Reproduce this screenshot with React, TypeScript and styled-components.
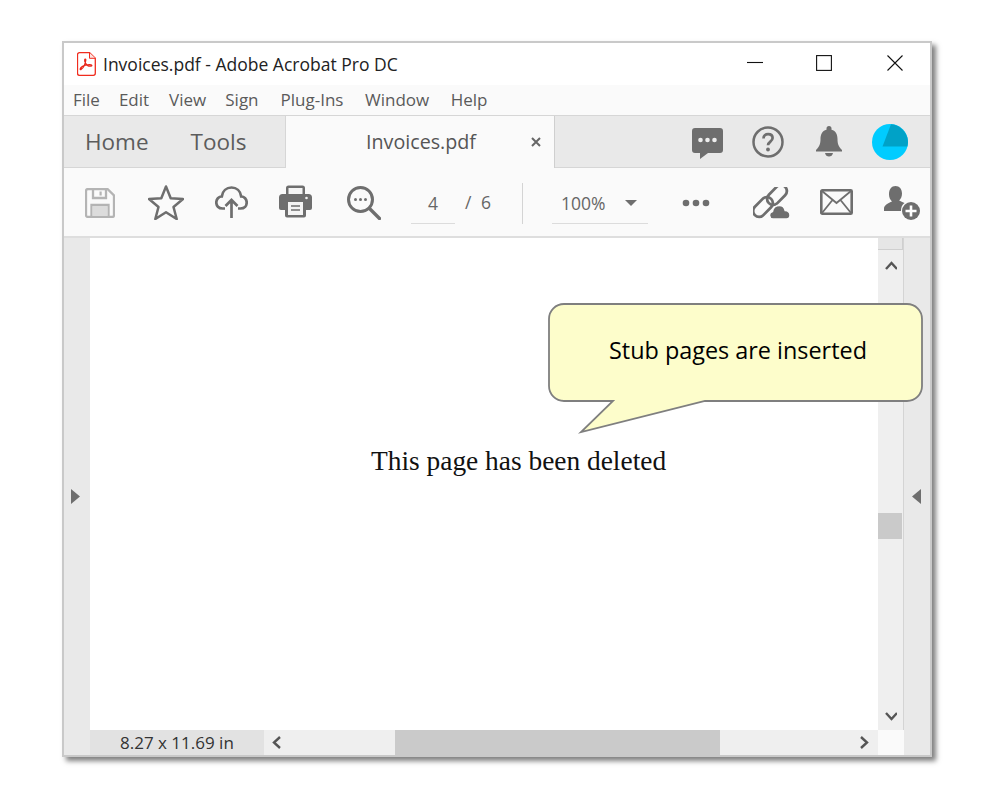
import React from 'react';
import styled, { createGlobalStyle } from 'styled-components';

const GlobalStyle = createGlobalStyle`
  html, body {
    margin: 0;
    padding: 0;
    background: #fff;
  }
`;

const UI_FONT = `"Open Sans", "Noto Sans", sans-serif`;

const Screen = styled.div`
  box-sizing: border-box;
  min-height: 100vh;
  padding: 41px 0 0 62px;
`;

const Window = styled.div`
  box-sizing: border-box;
  width: 870px;
  height: 716px;
  border: 2px solid #c9c9c9;
  box-shadow: 4px 4px 5px rgba(0, 0, 0, 0.5);
  display: flex;
  flex-direction: column;
  font-family: ${UI_FONT};
  background: #fff;
`;

const TitleBar = styled.div`
  height: 42px;
  display: flex;
  align-items: center;
  padding-left: 13px;
  background: #fff;
`;

const AppTitle = styled.span`
  margin-left: 7px;
  font-size: 17.5px;
  color: #222;
  flex: 1;
  white-space: nowrap;
`;

const WinControls = styled.div`
  display: flex;
  align-items: center;
  margin-right: 27px;
  padding-bottom: 2px;
`;

const MenuBar = styled.div`
  height: 30px;
  box-sizing: border-box;
  padding: 0 0 2px 9px;
  display: flex;
  align-items: center;
  background: #fafafa;
`;

const MenuItem = styled.span<{ $ml: number }>`
  margin-left: ${p => p.$ml}px;
  font-size: 17px;
  color: #5a5a5a;
`;

const TabRow = styled.div`
  height: 53px;
  box-sizing: border-box;
  display: flex;
  background: #e9e9e9;
  border-top: 1.5px solid #d6d6d6;
`;

const NavTabs = styled.div`
  width: 221px;
  box-sizing: border-box;
  padding: 0 0 1px 21px;
  display: flex;
  align-items: center;
  gap: 42px;
  border-bottom: 1.5px solid #d6d6d6;
`;

const NavTab = styled.span`
  font-size: 22.5px;
  color: #5c5c5c;
`;

const DocTab = styled.div`
  width: 270px;
  box-sizing: border-box;
  display: flex;
  align-items: center;
  padding: 0 13px 0 80px;
  background: #fafafa;
  border-left: 1px solid #d6d6d6;
  border-right: 1.5px solid #cfcfcf;
`;

const DocTabName = styled.span`
  flex: 1;
  padding-bottom: 1px;
  font-size: 19.7px;
  color: #555;
`;

const TabActions = styled.div`
  flex: 1;
  display: flex;
  align-items: center;
  border-bottom: 1.5px solid #d6d6d6;
  padding-left: 137px;
`;

const Toolbar = styled.div`
  height: 70px;
  box-sizing: border-box;
  display: flex;
  align-items: center;
  padding-left: 21px;
  background: #fafafa;
  border-bottom: 2px solid #dedede;
`;

const Glyph = styled.svg<{ $ml?: number; $mt?: number }>`
  display: block;
  flex: none;
  margin-left: ${p => p.$ml ?? 0}px;
  margin-top: ${p => p.$mt ?? 0}px;
`;

const PageField = styled.div`
  width: 44px;
  height: 40px;
  margin: 4px 0 0 30px;
  padding-bottom: 2px;
  box-sizing: border-box;
  border-bottom: 1.5px solid #dcdcdc;
  display: flex;
  align-items: center;
  justify-content: center;
  font-size: 17.5px;
  color: #666;
`;

const PageTotal = styled.span`
  margin: 0 0 0 10px;
  width: 37px;
  font-size: 17.5px;
  word-spacing: 5px;
  color: #666;
`;

const Divider = styled.div`
  width: 1px;
  height: 41px;
  margin-top: 3px;
  margin-left: 20px;
  background: #d4d4d4;
`;

const ZoomField = styled.div`
  width: 96px;
  height: 40px;
  margin: 4px 0 0 29px;
  box-sizing: border-box;
  padding: 0 11px 2px 9px;
  border-bottom: 1.5px solid #dcdcdc;
  display: flex;
  align-items: center;
  justify-content: space-between;
  font-size: 17.5px;
  color: #666;
`;

const Body = styled.div`
  position: relative;
  height: 492px;
  display: flex;
`;

const SidePanel = styled.div<{ $w: number; $line?: boolean; $pr: number }>`
  width: ${p => p.$w}px;
  box-sizing: border-box;
  display: flex;
  align-items: center;
  justify-content: center;
  padding: 24px ${p => p.$pr}px 0 0;
  background: #e9e9e9;
  border-left: ${p => (p.$line ? '1px solid #d4d4d4' : 'none')};
`;

const Page = styled.div`
  width: 788px;
  box-sizing: border-box;
  padding: 208px 0 0 281px;
  background: #fff;
  font-family: "Liberation Serif", "Times New Roman", serif;
  font-size: 27.4px;
  color: #111;
  white-space: nowrap;
`;

const VScroll = styled.div`
  width: 25px;
  background: #efefef;
  display: flex;
  flex-direction: column;
  align-items: center;
`;

const ScrollCap = styled.div`
  width: 100%;
  height: 12px;
  box-sizing: border-box;
  background: #e6e6e6;
  border-bottom: 1px solid #cfcfcf;
  border-right: 1px solid #cfcfcf;
`;

const VThumb = styled.div`
  width: 24px;
  height: 26px;
  margin: 240px 1px 0 0;
  background: #cacaca;
`;

const BottomRow = styled.div`
  height: 25px;
  display: flex;
`;

const BottomGutter = styled.div<{ $w: number }>`
  width: ${p => p.$w}px;
  background: #e9e9e9;
`;

const SizeBox = styled.div`
  width: 174px;
  box-sizing: border-box;
  padding: 0 0 0 30px;
  display: flex;
  align-items: center;
  background: #e2e2e2;
  font-size: 17px;
  color: #333;
`;

const HScroll = styled.div`
  width: 614px;
  box-sizing: border-box;
  padding: 0 8px 0 7px;
  display: flex;
  align-items: center;
  background: #efefef;
`;

const HThumb = styled.div`
  width: 325px;
  height: 100%;
  margin: 0 auto 0 112px;
  background: #cacaca;
`;

const ScrollCorner = styled.div`
  width: 26px;
  background: #fafafa;
`;

const Callout = styled.div`
  position: absolute;
  left: 484px;
  top: 65px;
  width: 377px;
  height: 132px;
`;

const CalloutShape = styled.svg`
  position: absolute;
  left: 0;
  top: 0;
`;

const CalloutText = styled.div`
  position: relative;
  height: 96px;
  padding-left: 3px;
  padding-bottom: 2px;
  box-sizing: border-box;
  display: flex;
  align-items: center;
  justify-content: center;
  font-size: 23.4px;
  color: #000;
`;

const GREY = '#6e6e6e';

const PdfIcon = () => (
  <Glyph width="19" height="24" viewBox="0 0 19 24" fill="none">
    <path d="M2.500 .7h10l5.800 5.600v15a2 2 0 0 1-2 2H2.500a2 2 0 0 1-2-2V2.700a2 2 0 0 1 2-2z" fill="#fff" stroke="#f02c1e" strokeWidth="1.300" />
    <path d="M12.500 .7v5.600h5.800" stroke="#f02c1e" strokeWidth="1" fill="#fde3e0" />
    <path d="M4 17.500c2.500-1.500 4.200-5 4.800-9.500.1-1-.9-1.200-1.100-.2-.4 2 1.800 5.200 3.400 6 1.300.6 3.800.6 3.800-.4 0-1-3-1.100-6.500-.2-2.500.7-4.700 2.400-5.200 3.700-.2.600.4 1 .8.600z" stroke="#e8261a" strokeWidth="1.300" />
  </Glyph>
);

const MinimizeIcon = () => (
  <Glyph width="16" height="16" viewBox="0 0 16 16">
    <path d="M0 7.500h16" stroke="#111" strokeWidth="1.100" />
  </Glyph>
);

const MaximizeIcon = () => (
  <Glyph $ml={53} width="16" height="16" viewBox="0 0 16 16">
    <rect x=".6" y=".6" width="14.800" height="14.800" fill="none" stroke="#111" strokeWidth="1.100" />
  </Glyph>
);

const CloseIcon = () => (
  <Glyph $ml={55} width="16" height="16" viewBox="0 0 16 16">
    <path d="M.5.500l15 15M15.500.500l-15 15" stroke="#111" strokeWidth="1.100" />
  </Glyph>
);

const TabCloseIcon = () => (
  <Glyph width="10" height="10" viewBox="0 0 10 10">
    <path d="M1 1l8 8M9 1l-8 8" stroke="#666" strokeWidth="2" />
  </Glyph>
);

const ChatIcon = () => (
  <Glyph width="31" height="31" viewBox="0 0 31 31" $mt={3}>
    <path d="M3 0h25a3 3 0 0 1 3 3v19a3 3 0 0 1-3 3H16l-8 6v-6H3a3 3 0 0 1-3-3V3a3 3 0 0 1 3-3z" fill={GREY} />
    <circle cx="8.500" cy="12" r="2.300" fill="#eee" />
    <circle cx="15.500" cy="12" r="2.300" fill="#eee" />
    <circle cx="22.500" cy="12" r="2.300" fill="#eee" />
  </Glyph>
);

const HelpIcon = () => (
  <Glyph $ml={29} width="32" height="32" viewBox="0 0 32 32" fill="none">
    <circle cx="16" cy="16" r="14.500" stroke={GREY} strokeWidth="2.500" />
    <path d="M11.500 12.500c0-2.700 2-4.300 4.600-4.300s4.500 1.500 4.500 3.900c0 3.500-4.600 3.500-4.600 7.200" stroke={GREY} strokeWidth="2.700" />
    <circle cx="16" cy="23.500" r="1.900" fill={GREY} />
  </Glyph>
);

const BellIcon = () => (
  <Glyph $ml={32} width="26" height="31" viewBox="0 0 26 31">
    <path d="M13 0a2.500 2.500 0 0 1 2.500 2.500v1.200C20 5 21.500 8.500 21.500 13c0 5 1 7.500 4.500 11v1.500H0V24c3.500-3.500 4.500-6 4.500-11 0-4.500 1.500-8 6-9.300V2.500A2.500 2.500 0 0 1 13 0z" fill={GREY} />
    <path d="M9 27h8c-.5 2.500-2 3.500-4 3.500S9.500 29.500 9 27z" fill={GREY} />
  </Glyph>
);

const AvatarIcon = () => (
  <Glyph $ml={30} width="36" height="36" viewBox="0 0 36 36">
    <circle cx="18" cy="18" r="18" fill="#00ccff" />
    <path d="M19 .2A18 18 0 0 1 35.700 21l-.4 1.500H10.500z" fill="#00a2c7" />
  </Glyph>
);

const SaveIcon = () => (
  <Glyph width="30" height="30" viewBox="0 0 30 30" fill="none" $mt={2}>
    <path d="M3 1h19.500L29 7.500V27a2 2 0 0 1-2 2H3a2 2 0 0 1-2-2V3a2 2 0 0 1 2-2z" stroke="#b4b4b4" strokeWidth="2.300" />
    <path d="M8 1.500v8.500h13V1.500M6.500 28.500V17h17v11.500" stroke="#b4b4b4" strokeWidth="2.300" />
    <rect x="7.500" y="18" width="15" height="10" fill="#dcdcdc" />
    <rect x="14.500" y="3.500" width="2.200" height="4" fill="#b4b4b4" />
  </Glyph>
);

const StarIcon = () => (
  <Glyph $ml={33} width="36" height="36" viewBox="0 0 36 36" fill="none">
    <path d="M18 2.500l4.700 11.700 12.300.8-9.500 8 3.200 12L18 28.300 7.300 35l3.200-12-9.500-8 12.300-.8z" stroke={GREY} strokeWidth="2.500" strokeLinejoin="round" />
  </Glyph>
);

const UploadIcon = () => (
  <Glyph $ml={31} width="33" height="33" viewBox="0 0 33 33" fill="none" $mt={1}>
    <path d="M10 22.500H7.500C3.500 22.500 1.300 19.800 1.300 16.500s2.400-6 5.500-6C7.500 5 11.500 1.500 16.500 1.500s9 3.500 9.700 9c3.100 0 5.500 2.700 5.500 6s-2.200 6-6.200 6H23" stroke={GREY} strokeWidth="2.700" />
    <path d="M16.500 32V14.500M10.500 20l6-6 6 6" stroke={GREY} strokeWidth="2.700" />
  </Glyph>
);

const PrintIcon = () => (
  <Glyph $ml={31} width="33" height="33" viewBox="0 0 33 33" $mt={-1}>
    <path d="M7 9V3a2.500 2.500 0 0 1 2.500-2.500h14A2.500 2.500 0 0 1 26 3v6h3.500A3.500 3.500 0 0 1 33 12.500V23a2 2 0 0 1-2 2h-4v5.500a2 2 0 0 1-2 2H8a2 2 0 0 1-2-2V25H2a2 2 0 0 1-2-2V12.500A3.500 3.500 0 0 1 3.500 9z" fill={GREY} />
    <rect x="9.500" y="3" width="14" height="6" fill="#f4f4f4" />
    <rect x="9" y="17" width="15" height="13" fill="#f4f4f4" />
    <path d="M12 21h9M12 25h9" stroke={GREY} strokeWidth="1.600" />
    <circle cx="27.500" cy="13" r="1.300" fill="#f4f4f4" />
  </Glyph>
);

const SearchIcon = () => (
  <Glyph $ml={35} width="34" height="34" viewBox="0 0 34 34" fill="none" $mt={1}>
    <circle cx="13.500" cy="13.500" r="12" stroke={GREY} strokeWidth="3" />
    <path d="M22.500 22.500L32.500 32.500" stroke={GREY} strokeWidth="3.400" strokeLinecap="round" />
    <circle cx="8.500" cy="13.500" r="1.500" fill={GREY} />
    <circle cx="13.500" cy="13.500" r="1.500" fill={GREY} />
    <circle cx="18.500" cy="13.500" r="1.500" fill={GREY} />
  </Glyph>
);

const CaretIcon = () => (
  <Glyph width="12" height="6" viewBox="0 0 12 6">
    <path d="M0 0h12L6 6z" fill={GREY} />
  </Glyph>
);

const MoreIcon = () => (
  <Glyph $ml={34} width="28" height="8" viewBox="0 0 28 8" $mt={2}>
    <circle cx="4" cy="4" r="3.300" fill={GREY} />
    <circle cx="14" cy="4" r="3.300" fill={GREY} />
    <circle cx="24" cy="4" r="3.300" fill={GREY} />
  </Glyph>
);

const LinkIcon = () => (
  <Glyph $ml={43} width="37" height="33" viewBox="0 0 37 33" fill="none" $mt={2}>
    <rect x="-1.500" y="14" width="23" height="12" rx="6" transform="rotate(-45 10 20)" stroke={GREY} strokeWidth="2.800" />
    <rect x="12.500" y="2" width="23" height="12" rx="6" transform="rotate(-45 24 8)" stroke={GREY} strokeWidth="2.800" />
    <path d="M20 32a3.800 3.800 0 0 1-.5-7.500C20 21 23 18.500 26.500 18.500c3 0 5 2 5.700 5 2.800.2 4.800 2.300 4.800 4.700 0 2.200-1.500 3.800-3.500 3.800z" fill={GREY} stroke="#fafafa" strokeWidth="1.500" />
  </Glyph>
);

const MailIcon = () => (
  <Glyph $ml={30} width="33" height="26" viewBox="0 0 33 26" fill="none">
    <rect x="1.300" y="1.300" width="30.400" height="23.400" rx="1" stroke={GREY} strokeWidth="2.600" />
    <path d="M2 2l14.500 12L31 2M2 24l10.500-13M31 24L20.500 11" stroke={GREY} strokeWidth="1.800" />
  </Glyph>
);

const UserAddIcon = () => (
  <Glyph $ml={31} width="36" height="34" viewBox="0 0 36 34" $mt={2}>
    <path d="M11.500 0c4 0 6.500 3 6.500 7.500 0 3-1 5.300-2.800 7 1.500 1 3.500 1.700 5.300 2.500-2.500 2-3.500 4.300-3.500 8H0v-2.500c0-3.500 4.500-5.500 8-7-1.800-1.700-3-4-3-7C5 3 7.500 0 11.500 0z" fill={GREY} />
    <circle cx="27" cy="25" r="9" fill={GREY} />
    <path d="M27 19.500v11M21.500 25h11" stroke="#fff" strokeWidth="2.600" />
  </Glyph>
);

const TriangleLeft = () => (
  <Glyph width="9" height="15" viewBox="0 0 9 15">
    <path d="M9 0v15L0 7.500z" fill={GREY} />
  </Glyph>
);

const TriangleRight = () => (
  <Glyph width="9" height="15" viewBox="0 0 9 15">
    <path d="M0 0v15l9-7.500z" fill={GREY} />
  </Glyph>
);

const Chevron = ({ dir, mt, ml }: { dir: 'up' | 'down' | 'left' | 'right'; mt?: number; ml?: number }) => {
  const paths = {
    up: 'M1 9l5.500-6 5.500 6',
    down: 'M1 3l5.500 6 5.500-6',
    left: 'M9 1L3 6.500 9 12',
    right: 'M3 1l6 5.500L3 12',
  };
  return (
    <Glyph $mt={mt} $ml={ml} width="12" height="13" viewBox="0 0 12 13" fill="none">
      <path d={paths[dir]} stroke="#555" strokeWidth="2.400" />
    </Glyph>
  );
};

// the gaps in the real menu are not even
const menus = [
  { label: 'File', gap: 0 },
  { label: 'Edit', gap: 19 },
  { label: 'View', gap: 20 },
  { label: 'Sign', gap: 19 },
  { label: 'Plug-Ins', gap: 22 },
  { label: 'Window', gap: 21.5 },
  { label: 'Help', gap: 21.5 },
];

export default function App() {
  return (
    <Screen>
      <GlobalStyle />
      <Window>
        <TitleBar>
          <PdfIcon />
          <AppTitle>Invoices.pdf - Adobe Acrobat Pro DC</AppTitle>
          <WinControls>
            <MinimizeIcon />
            <MaximizeIcon />
            <CloseIcon />
          </WinControls>
        </TitleBar>

        <MenuBar>
          {menus.map(m => (
            <MenuItem key={m.label} $ml={m.gap}>{m.label}</MenuItem>
          ))}
        </MenuBar>

        <TabRow>
          <NavTabs>
            <NavTab>Home</NavTab>
            <NavTab>Tools</NavTab>
          </NavTabs>
          <DocTab>
            <DocTabName>Invoices.pdf</DocTabName>
            <TabCloseIcon />
          </DocTab>
          <TabActions>
            <ChatIcon />
            <HelpIcon />
            <BellIcon />
            <AvatarIcon />
          </TabActions>
        </TabRow>

        <Toolbar>
          <SaveIcon />
          <StarIcon />
          <UploadIcon />
          <PrintIcon />
          <SearchIcon />
          <PageField>4</PageField>
          <PageTotal>/ 6</PageTotal>
          <Divider />
          <ZoomField>
            100%
            <CaretIcon />
          </ZoomField>
          <MoreIcon />
          <LinkIcon />
          <MailIcon />
          <UserAddIcon />
        </Toolbar>

        <Body>
          <SidePanel $w={26} $pr={3}>
            <TriangleRight />
          </SidePanel>
          <Page>This page has been deleted</Page>
          <VScroll>
            <ScrollCap />
            <Chevron dir="up" mt={10} />
            <VThumb />
            <Chevron dir="down" mt={171} />
          </VScroll>
          <SidePanel $w={27} $line $pr={2}>
            <TriangleLeft />
          </SidePanel>
          <Callout>
            <CalloutShape width="377" height="132" viewBox="0 0 377 132">
              <path
                d="M16 1H359A15 15 0 0 1 374 16V83A15 15 0 0 1 359 98H157L33 129 65 98H16A15 15 0 0 1 1 83V16A15 15 0 0 1 16 1Z"
                fill="#fdfdcb"
                stroke="#7f7f7f"
                strokeWidth="1.800"
              />
            </CalloutShape>
            <CalloutText>Stub pages are inserted</CalloutText>
          </Callout>
        </Body>

        <BottomRow>
          <BottomGutter $w={26} />
          <SizeBox>8.27 x 11.69 in</SizeBox>
          <HScroll>
            <Chevron dir="left" />
            <HThumb />
            <Chevron dir="right" />
          </HScroll>
          <ScrollCorner />
          <BottomGutter $w={26} />
        </BottomRow>
      </Window>
    </Screen>
  );
}
